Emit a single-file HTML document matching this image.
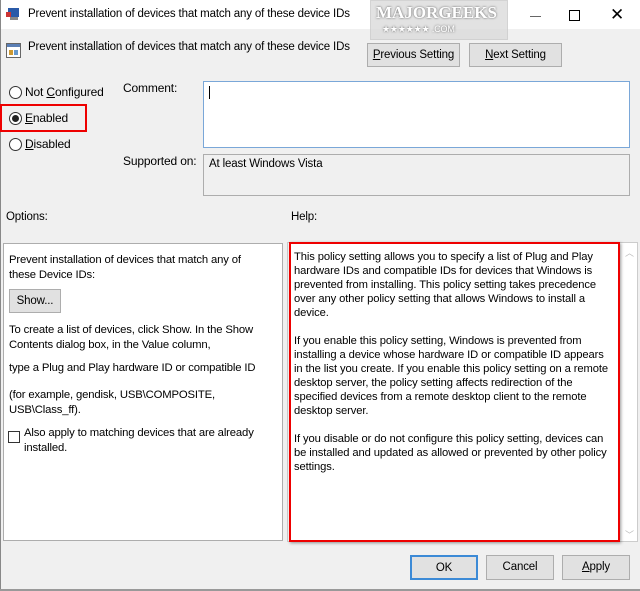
<!DOCTYPE html>
<html><head><style>
*{margin:0;padding:0;box-sizing:border-box}
body{width:640px;height:591px;background:#f0f0f0;font-family:"Liberation Sans",sans-serif;font-size:11px;color:#000;position:relative;overflow:hidden;letter-spacing:-0.15px}
.a{position:absolute;white-space:nowrap}
.btn{position:absolute;background:#e1e1e1;border:1px solid #adadad;text-align:center;font-size:11.5px}
u{text-decoration:underline}
.radio{position:absolute;width:13px;height:13px;border:1px solid #333;border-radius:50%;background:#fff}
</style></head><body>
<div class="a" style="left:0;top:0;width:640px;height:29px;background:#fff"></div>
<div class="a" style="left:0;top:0;width:1px;height:591px;background:#888"></div>
<svg class="a" style="left:6px;top:6px" width="16" height="16"><rect x="2" y="2" width="11" height="9" fill="#2a5aa8"/><rect x="4" y="11" width="8" height="3" fill="#888"/><rect x="0" y="6" width="5" height="5" fill="#c33"/></svg>
<div class="a" style="left:28px;top:8px;font-size:11.5px">Prevent installation of devices that match any of these device IDs</div>
<div class="a" style="left:370px;top:0;width:138px;height:40px;background:#ddd;opacity:.85;border:1px solid #ccc"></div>
<div class="a" style="left:376px;top:3px;font:bold 17px 'Liberation Serif',serif;color:#fff;text-shadow:0 0 2px #555;letter-spacing:0">MAJORGEEKS</div>
<div class="a" style="left:382px;top:24px;font-size:9px;color:#fff;text-shadow:0 0 2px #555">★★★★★★ .COM</div>
<div class="a" style="left:530px;top:16px;width:11px;height:1px;background:#666"></div>
<div class="a" style="left:569px;top:10px;width:11px;height:11px;border:1px solid #000"></div>
<div class="a" style="left:610px;top:5px;font-size:17px;letter-spacing:0">✕</div>
<svg class="a" style="left:6px;top:43px" width="15" height="15"><rect x="0.5" y="0.5" width="14" height="14" fill="#fff" stroke="#666"/><rect x="1" y="1" width="13" height="3" fill="#5b7fb5"/><rect x="3" y="7" width="4" height="5" fill="#c93"/><rect x="8" y="7" width="4" height="5" fill="#69c"/></svg>
<div class="a" style="left:28px;top:41px;font-size:11.5px">Prevent installation of devices that match any of these device IDs</div>
<div class="btn" style="left:367px;top:43px;width:93px;height:24px;line-height:22px"><u>P</u>revious Setting</div>
<div class="btn" style="left:469px;top:43px;width:93px;height:24px;line-height:22px"><u>N</u>ext Setting</div>
<div class="radio" style="left:9px;top:86px"></div>
<div class="a" style="left:25px;top:85px;font-size:12px">Not <u>C</u>onfigured</div>
<div class="a" style="left:0;top:104px;width:87px;height:28px;border:2px solid #e00"></div>
<div class="radio" style="left:9px;top:112px"></div>
<div class="a" style="left:12px;top:115px;width:7px;height:7px;border-radius:50%;background:#222"></div>
<div class="a" style="left:25px;top:111px;font-size:12px"><u>E</u>nabled</div>
<div class="radio" style="left:9px;top:138px"></div>
<div class="a" style="left:25px;top:137px;font-size:12px"><u>D</u>isabled</div>
<div class="a" style="left:123px;top:81px;font-size:12px">Comment:</div>
<div class="a" style="left:203px;top:81px;width:427px;height:67px;background:#fff;border:1px solid #7aa7d8"></div>
<div class="a" style="left:209px;top:86px;width:1px;height:13px;background:#000"></div>
<div class="a" style="left:123px;top:154px;font-size:12px">Supported on:</div>
<div class="a" style="left:203px;top:154px;width:427px;height:42px;background:#f0f0f0;border:1px solid #adadad"></div>
<div class="a" style="left:209px;top:158px;font-size:11.5px">At least Windows Vista</div>
<div class="a" style="left:6px;top:211px;font-size:11.5px">Options:</div>
<div class="a" style="left:291px;top:211px;font-size:11.5px">Help:</div>
<div class="a" style="left:3px;top:243px;width:280px;height:298px;background:#fff;border:1px solid #adadad"></div>
<div class="a" style="left:9px;top:253px;line-height:15px;font-size:11.3px">Prevent installation of devices that match any of<br>these Device IDs:</div>
<div class="btn" style="left:9px;top:289px;width:52px;height:24px;line-height:22px">Show...</div>
<div class="a" style="left:9px;top:323px;line-height:15px;font-size:11.3px">To create a list of devices, click Show. In the Show<br>Contents dialog box, in the Value column,</div>
<div class="a" style="left:9px;top:362px;font-size:11.3px">type a Plug and Play hardware ID or compatible ID</div>
<div class="a" style="left:9px;top:388px;line-height:15px;font-size:11.3px">(for example, gendisk, USB\COMPOSITE,<br>USB\Class_ff).</div>
<div class="a" style="left:8px;top:431px;width:12px;height:12px;border:1px solid #333;background:#fff"></div>
<div class="a" style="left:24px;top:426px;line-height:15px;font-size:11.3px">Also apply to matching devices that are already<br>installed.</div>
<div class="a" style="left:287px;top:242px;width:351px;height:300px;background:#fff;border:1px solid #ccc"></div>
<div class="a" style="left:289px;top:242px;width:331px;height:300px;border:2px solid #e00;box-shadow:1px 1px 3px rgba(0,0,0,.4)"></div>
<div class="a" style="left:625px;top:246px;color:#bbb;font-size:9px">︿</div>
<div class="a" style="left:625px;top:528px;color:#bbb;font-size:9px">﹀</div>
<div class="a" style="left:294px;top:250px;line-height:14px;font-size:11.2px;letter-spacing:-0.1px">This policy setting allows you to specify a list of Plug and Play<br>hardware IDs and compatible IDs for devices that Windows is<br>prevented from installing. This policy setting takes precedence<br>over any other policy setting that allows Windows to install a<br>device.<br><br>If you enable this policy setting, Windows is prevented from<br>installing a device whose hardware ID or compatible ID appears<br>in the list you create. If you enable this policy setting on a remote<br>desktop server, the policy setting affects redirection of the<br>specified devices from a remote desktop client to the remote<br>desktop server.<br><br>If you disable or do not configure this policy setting, devices can<br>be installed and updated as allowed or prevented by other policy<br>settings.</div>
<div class="btn" style="left:410px;top:555px;width:68px;height:25px;line-height:23px;border:2px solid #3c8ad6">OK</div>
<div class="btn" style="left:486px;top:555px;width:68px;height:25px;line-height:23px">Cancel</div>
<div class="btn" style="left:562px;top:555px;width:68px;height:25px;line-height:23px"><u>A</u>pply</div>
<div class="a" style="left:0;top:589px;width:640px;height:2px;background:#999"></div>
</body></html>
